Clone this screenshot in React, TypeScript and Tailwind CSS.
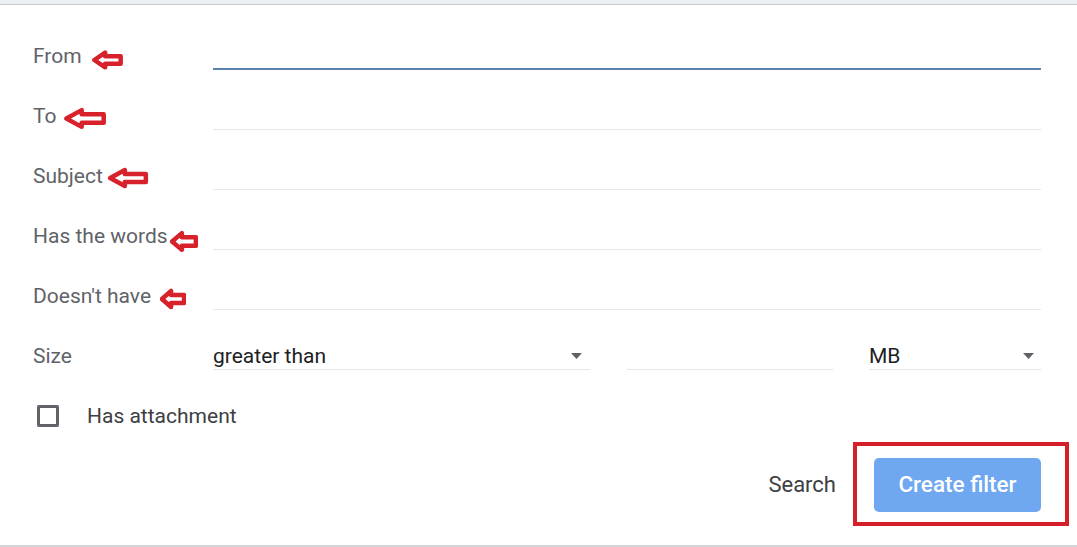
import React from "react";

function Arrow({ w, h, ml, mt }: { w: number; h: number; ml: string; mt: string }) {
  return (
    <svg
      width={w}
      height={h}
      viewBox="0 0 40 22"
      preserveAspectRatio="none"
      className={`shrink-0 ${ml} ${mt}`}
    >
      <path
        d="M3 11 L17 3 L17 7 L37 7 L37 15 L17 15 L17 19 Z"
        fill="#ffffff"
        stroke="#d7222b"
        strokeWidth={4.5}
        strokeLinejoin="round"
        vectorEffect="non-scaling-stroke"
      />
    </svg>
  );
}

function Row({
  label,
  arrow,
  active,
}: {
  label: string;
  arrow: React.ReactNode;
  active?: boolean;
}) {
  return (
    <div className="flex h-[60px] items-end">
      <div className="mb-[2px] flex h-[24px] w-[180px] shrink-0 items-start">
        <span className="whitespace-nowrap leading-[24px] text-[#5f6368]">{label}</span>
        {arrow}
      </div>
      <div
        className={`h-[40px] flex-1 ${
          active ? "border-b-2 border-[#5a83b0]" : "border-b border-[#e6e7e9]"
        }`}
      />
    </div>
  );
}

function Caret() {
  return (
    <svg width="11" height="6" viewBox="0 0 11 6" className="mb-[9px] shrink-0">
      <path d="M0 0 L11 0 L5.5 6 Z" fill="#5f6368" />
    </svg>
  );
}

export default function App() {
  return (
    <div
      className="flex h-[547px] w-[1077px] flex-col overflow-hidden bg-white text-[21px]"
      style={{ fontFamily: "Roboto, 'Liberation Sans', Arial, sans-serif" }}
    >
      <div className="h-[5px] shrink-0 border-b border-[#c8ccd2] bg-[#eceff3]" />
      <div className="flex flex-col pl-[33px] pr-[36px] pt-[5px]">
        <Row label="From" active arrow={<Arrow w={31} h={20} ml="ml-[10px]" mt="mt-[6px]" />} />
        <Row label="To" arrow={<Arrow w={44} h={23} ml="ml-[6px]" mt="mt-[3px]" />} />
        <Row label="Subject" arrow={<Arrow w={42} h={22} ml="ml-[4px]" mt="mt-[3px]" />} />
        <Row label="Has the words" arrow={<Arrow w={28} h={23} ml="ml-[2px]" mt="mt-[6px]" />} />
        <Row label="Doesn't have" arrow={<Arrow w={26} h={22} ml="ml-[9px]" mt="mt-[4px]" />} />
        <div className="flex h-[60px] items-end">
          <div className="mb-[2px] w-[180px] shrink-0 leading-[24px] text-[#5f6368]">Size</div>
          <div className="flex h-[40px] w-[377px] items-end justify-between border-b border-[#e6e7e9] pb-[1px] pr-[8px]">
            <span className="leading-[24px] text-[#202124]">greater than</span>
            <Caret />
          </div>
          <div className="ml-[37px] h-[40px] w-[206px] border-b border-[#e6e7e9]" />
          <div className="ml-[36px] flex h-[40px] flex-1 items-end justify-between border-b border-[#e6e7e9] pb-[1px] pr-[7px]">
            <span className="leading-[24px] text-[#202124]">MB</span>
            <Caret />
          </div>
        </div>
        <div className="mt-[34px] flex h-[24px] items-center">
          <div className="ml-[4px] h-[22px] w-[22px] rounded-[2px] border-[3px] border-[#5f6368]" />
          <span className="ml-[28px] leading-[24px] text-[#3c4043]">Has attachment</span>
        </div>
        <div className="mt-[30px] flex items-center justify-end">
          <span className="text-[22px] leading-[24px] text-[#3c4043]">Search</span>
          <div className="relative ml-[38px]">
            <div className="flex h-[54px] w-[167px] items-center justify-center rounded-[5px] bg-[#6fa8f0] text-[22.5px] font-medium text-white">
              Create filter
            </div>
            <div className="absolute -bottom-[14px] -left-[21px] -right-[28px] -top-[16px] border-4 border-[#d5202a]" />
          </div>
        </div>
      </div>
      <div className="mt-auto h-[2px] shrink-0 bg-[#d4d5d7]" />
    </div>
  );
}
